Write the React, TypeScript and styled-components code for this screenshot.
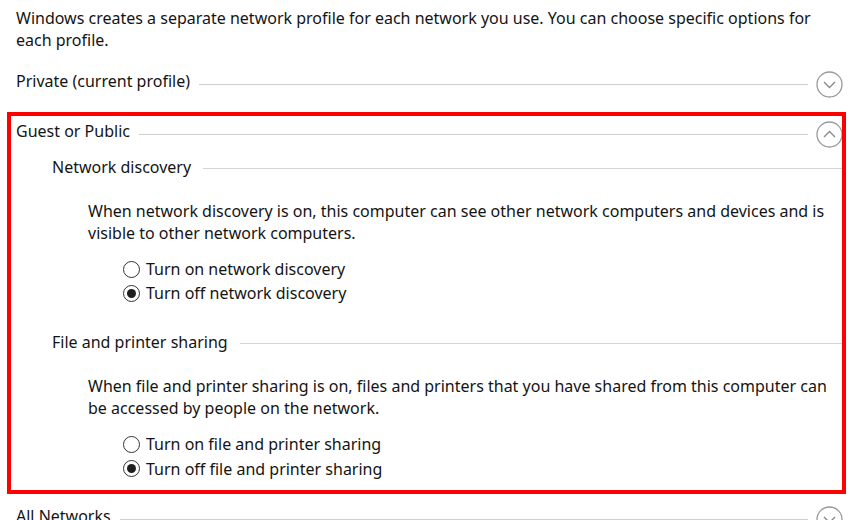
import React from "react";
import styled, { createGlobalStyle } from "styled-components";

const Global = createGlobalStyle`
  html, body { margin: 0; padding: 0; background: #ffffff; }
  body {
    font-family: "Segoe UI", "Noto Sans", "Open Sans", sans-serif;
    font-size: 16px;
    color: #141414;
    width: 860px;
    height: 520px;
    overflow: hidden;
  }
`;

const Page = styled.div`
  padding: 7px 17px 0 16px;
  box-sizing: border-box;
  width: 860px;
`;

const Text = styled.p<{ $indent?: number; $mt?: number }>`
  margin: ${(p) => p.$mt ?? 0}px 0 0 ${(p) => p.$indent ?? 0}px;
  line-height: 22px;
  white-space: nowrap;
`;

const HeaderRow = styled.div<{ $mt: number }>`
  display: flex;
  align-items: center;
  height: 27px;
  margin-top: ${(p) => p.$mt}px;
`;

const HeaderTitle = styled.span`
  line-height: 22px;
  padding-bottom: 8px;
  white-space: nowrap;
`;

const Rule = styled.div`
  flex: 1;
  height: 1px;
  background: #cfcfcf;
  margin-left: 9px;
`;

const ChevronButton = styled.span`
  width: 27px;
  height: 27px;
  margin-left: 8px;
  flex: none;
  display: block;
`;

const GuestSection = styled.section`
  position: relative;
  margin-top: 14px;
  padding: 9px 0 13px 0;
  &::after {
    content: "";
    position: absolute;
    top: 0;
    bottom: 0;
    left: -9px;
    right: -3px;
    border: 4px solid #ff0000;
    pointer-events: none;
  }
`;

const SubRow = styled.div<{ $mt: number }>`
  display: flex;
  align-items: center;
  height: 22px;
  margin: ${(p) => p.$mt}px 0 0 36px;
`;

const SubTitle = styled.span`
  line-height: 22px;
  padding-bottom: 2px;
  white-space: nowrap;
`;

const SubRule = styled.div`
  flex: 1;
  height: 1px;
  background: #d4d4d4;
  margin-left: 12px;
  margin-top: 1px;
`;

const RadioList = styled.div`
  margin: 13px 0 0 107px;
  display: flex;
  flex-direction: column;
`;

const RadioRow = styled.label<{ $h: number }>`
  display: flex;
  align-items: center;
  height: ${(p) => p.$h}px;
  gap: 6px;
  white-space: nowrap;
`;

const RadioCircle = styled.span<{ $checked?: boolean }>`
  width: 17px;
  height: 17px;
  box-sizing: border-box;
  border: 1px solid #333333;
  border-radius: 50%;
  display: flex;
  align-items: center;
  justify-content: center;
  flex: none;
  &::before {
    content: "";
    width: 9px;
    height: 9px;
    border-radius: 50%;
    background: ${(p) => (p.$checked ? "#1f1f1f" : "transparent")};
  }
`;

const Chevron = ({ up }: { up?: boolean }) => (
  <ChevronButton>
    <svg width="27" height="27" viewBox="0 0 27 27">
      <circle cx="13.5" cy="13.5" r="12.5" fill="none" stroke="#9a9a9a" strokeWidth="1.3" />
      <path
        d={up ? "M8 16 L13.5 10.5 L19 16" : "M8 11 L13.5 16.5 L19 11"}
        fill="none"
        stroke="#8a8a8a"
        strokeWidth="1.4"
      />
    </svg>
  </ChevronButton>
);

const Header = ({ title, mt, up }: { title: string; mt: number; up?: boolean }) => (
  <HeaderRow $mt={mt}>
    <HeaderTitle>{title}</HeaderTitle>
    <Rule />
    <Chevron up={up} />
  </HeaderRow>
);

const Radio = ({ label, checked, h }: { label: string; checked?: boolean; h: number }) => (
  <RadioRow $h={h}>
    <RadioCircle $checked={checked} />
    <span>{label}</span>
  </RadioRow>
);

export default function App() {
  return (
    <>
      <Global />
      <Page>
        <Text>
          Windows creates a separate network profile for each network you use. You can choose specific options for
          <br />
          each profile.
        </Text>
        <Header title="Private (current profile)" mt={20} />
        <GuestSection>
          <Header title="Guest or Public" mt={0} up />
          <SubRow $mt={9}>
            <SubTitle>Network discovery</SubTitle>
            <SubRule />
          </SubRow>
          <Text $indent={72} $mt={21}>
            When network discovery is on, this computer can see other network computers and devices and is
            <br />
            visible to other network computers.
          </Text>
          <RadioList>
            <Radio h={24} label="Turn on network discovery" />
            <Radio h={24} label="Turn off network discovery" checked />
          </RadioList>
          <SubRow $mt={27}>
            <SubTitle>File and printer sharing</SubTitle>
            <SubRule />
          </SubRow>
          <Text $indent={72} $mt={21}>
            When file and printer sharing is on, files and printers that you have shared from this computer can
            <br />
            be accessed by people on the network.
          </Text>
          <RadioList>
            <Radio h={24} label="Turn on file and printer sharing" />
            <Radio h={25} label="Turn off file and printer sharing" checked />
          </RadioList>
        </GuestSection>
        <Header title="All Networks" mt={12} />
      </Page>
    </>
  );
}
